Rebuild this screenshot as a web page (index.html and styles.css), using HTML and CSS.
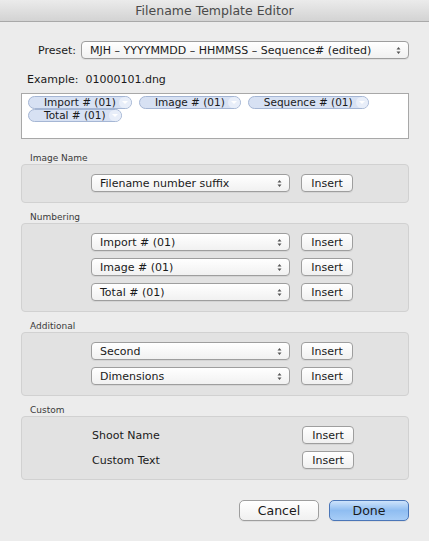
FILE: index.html
```html
<!DOCTYPE html>
<html>
<head>
<meta charset="utf-8">
<link rel="stylesheet" href="styles.css">
</head>
<body>
<div class="window">
  <div class="titlebar">Filename Template Editor</div>
  <div class="content">
    <div class="preset-row">
      <span class="preset-label">Preset:</span>
      <div class="select preset-select"><span>MJH – YYYYMMDD – HHMMSS – Sequence# (edited)</span><span class="arrows"><svg width="5" height="9" viewBox="0 0 5 9"><path d="M0.5 3.5 L2.5 1 L4.5 3.5 Z M0.5 5.5 L2.5 8 L4.5 5.5 Z" fill="#555"/></svg></span></div>
    </div>
    <div class="example">Example:&nbsp; 01000101.dng</div>
    <div class="tokenbox">
      <span class="token"><span class="tk-text">Import # (01)</span><span class="tk-arrow"></span></span>
      <span class="token"><span class="tk-text">Image # (01)</span><span class="tk-arrow"></span></span>
      <span class="token"><span class="tk-text">Sequence # (01)</span><span class="tk-arrow"></span></span>
      <span class="token"><span class="tk-text">Total # (01)</span><span class="tk-arrow"></span></span>
    </div>

    <div class="section first">
      <div class="sec-label">Image Name</div>
      <div class="sec-box">
        <div class="row"><div class="select row-select"><span>Filename number suffix</span><span class="arrows"><svg width="5" height="9" viewBox="0 0 5 9"><path d="M0.5 3.5 L2.5 1 L4.5 3.5 Z M0.5 5.5 L2.5 8 L4.5 5.5 Z" fill="#555"/></svg></span></div><div class="btn">Insert</div></div>
      </div>
    </div>

    <div class="section">
      <div class="sec-label">Numbering</div>
      <div class="sec-box">
        <div class="row"><div class="select row-select"><span>Import # (01)</span><span class="arrows"><svg width="5" height="9" viewBox="0 0 5 9"><path d="M0.5 3.5 L2.5 1 L4.5 3.5 Z M0.5 5.5 L2.5 8 L4.5 5.5 Z" fill="#555"/></svg></span></div><div class="btn">Insert</div></div>
        <div class="row"><div class="select row-select"><span>Image # (01)</span><span class="arrows"><svg width="5" height="9" viewBox="0 0 5 9"><path d="M0.5 3.5 L2.5 1 L4.5 3.5 Z M0.5 5.5 L2.5 8 L4.5 5.5 Z" fill="#555"/></svg></span></div><div class="btn">Insert</div></div>
        <div class="row"><div class="select row-select"><span>Total # (01)</span><span class="arrows"><svg width="5" height="9" viewBox="0 0 5 9"><path d="M0.5 3.5 L2.5 1 L4.5 3.5 Z M0.5 5.5 L2.5 8 L4.5 5.5 Z" fill="#555"/></svg></span></div><div class="btn">Insert</div></div>
      </div>
    </div>

    <div class="section">
      <div class="sec-label">Additional</div>
      <div class="sec-box">
        <div class="row"><div class="select row-select"><span>Second</span><span class="arrows"><svg width="5" height="9" viewBox="0 0 5 9"><path d="M0.5 3.5 L2.5 1 L4.5 3.5 Z M0.5 5.5 L2.5 8 L4.5 5.5 Z" fill="#555"/></svg></span></div><div class="btn">Insert</div></div>
        <div class="row"><div class="select row-select"><span>Dimensions</span><span class="arrows"><svg width="5" height="9" viewBox="0 0 5 9"><path d="M0.5 3.5 L2.5 1 L4.5 3.5 Z M0.5 5.5 L2.5 8 L4.5 5.5 Z" fill="#555"/></svg></span></div><div class="btn">Insert</div></div>
      </div>
    </div>

    <div class="section">
      <div class="sec-label">Custom</div>
      <div class="sec-box">
        <div class="row"><div class="row-text">Shoot Name</div><div class="btn">Insert</div></div>
        <div class="row"><div class="row-text">Custom Text</div><div class="btn">Insert</div></div>
      </div>
    </div>

    <div class="footer">
      <div class="btn big">Cancel</div>
      <div class="btn big primary">Done</div>
    </div>
  </div>
</div>
</body>
</html>
```

FILE: styles.css
```css
html, body {
  margin: 0;
  padding: 0;
  background: #ececec;
}
body {
  font-family: "DejaVu Sans", "Liberation Sans", sans-serif;
  font-size: 11px;
  color: #1a1a1a;
}
.window {
  width: 429px;
  height: 541px;
  background: #ececec;
  overflow: hidden;
}
.titlebar {
  height: 21px;
  line-height: 21px;
  text-align: center;
  font-size: 12.5px;
  color: #4a4a4a;
  background: linear-gradient(#ebebeb, #d3d3d3);
  border-bottom: 1px solid #a9a9a9;
}
.content {
  padding: 0 20px 0 21px;
}
.preset-row {
  display: flex;
  align-items: center;
  margin-top: 19px;
}
.preset-label {
  width: 55px;
  text-align: right;
  padding-right: 5px;
}
.select {
  display: flex;
  align-items: center;
  justify-content: space-between;
  box-sizing: border-box;
  height: 18px;
  border: 1px solid #9e9e9e;
  border-radius: 4px;
  background: linear-gradient(#ffffff, #f1f1f1);
  padding: 0 7px 0 8px;
  box-shadow: 0 1px 0 rgba(0,0,0,0.06);
}
.arrows {
  display: flex;
  align-items: center;
}
.preset-select {
  width: 328px;
}
.example {
  margin: 14px 0 0 6px;
  line-height: 14px;
}
.tokenbox {
  box-sizing: border-box;
  margin-top: 6px;
  height: 46px;
  background: #ffffff;
  border: 1px solid #a8a8a8;
  padding: 2px 6px;
  display: flex;
  flex-wrap: wrap;
  align-content: flex-start;
  column-gap: 7px;
  row-gap: 0;
}
.token {
  display: inline-flex;
  align-items: center;
  height: 13px;
  box-sizing: border-box;
  border: 1px solid #a5b6d4;
  border-radius: 7px;
  background: #d7e1f3;
  font-size: 10.5px;
  line-height: 11px;
  padding-left: 15px;
}
.tk-text {
  padding-right: 3px;
}
.tk-arrow {
  width: 12px;
  height: 11px;
  border-radius: 6px;
  background: #e8eef9;
  position: relative;
}
.tk-arrow::after {
  content: "";
  position: absolute;
  left: 3px;
  top: 4px;
  border-left: 3px solid transparent;
  border-right: 3px solid transparent;
  border-top: 3px solid #ffffff;
}
.section {
  margin-top: 8px;
}
.section.first {
  margin-top: 13px;
}
.sec-label {
  font-size: 9px;
  line-height: 12px;
  color: #3a3a3a;
  padding-left: 9px;
}
.sec-box {
  box-sizing: border-box;
  width: 388px;
  background: #e2e2e2;
  border: 1px solid #d1d1d1;
  border-radius: 4px;
  padding: 9px 0 10px 69px;
  display: flex;
  flex-direction: column;
  gap: 7px;
}
.row {
  display: flex;
  align-items: center;
  height: 18px;
}
.row-select {
  width: 199px;
}
.row-text {
  width: 199px;
  padding-left: 1px;
}
.btn {
  box-sizing: border-box;
  height: 18px;
  width: 52px;
  margin-left: 11px;
  border: 1px solid #9e9e9e;
  border-radius: 4px;
  background: linear-gradient(#ffffff, #f0f0f0);
  display: flex;
  align-items: center;
  justify-content: center;
  box-shadow: 0 1px 0 rgba(0,0,0,0.06);
}
.footer {
  display: flex;
  justify-content: flex-end;
  margin-top: 20px;
}
.btn.big {
  width: 80px;
  height: 21px;
  font-size: 12.5px;
  margin-left: 10px;
  border-radius: 5px;
}
.btn.primary {
  border-color: #4a76b8;
  background: linear-gradient(#cde3fb, #8fbdf1 50%, #a7cdf7);
}
```
